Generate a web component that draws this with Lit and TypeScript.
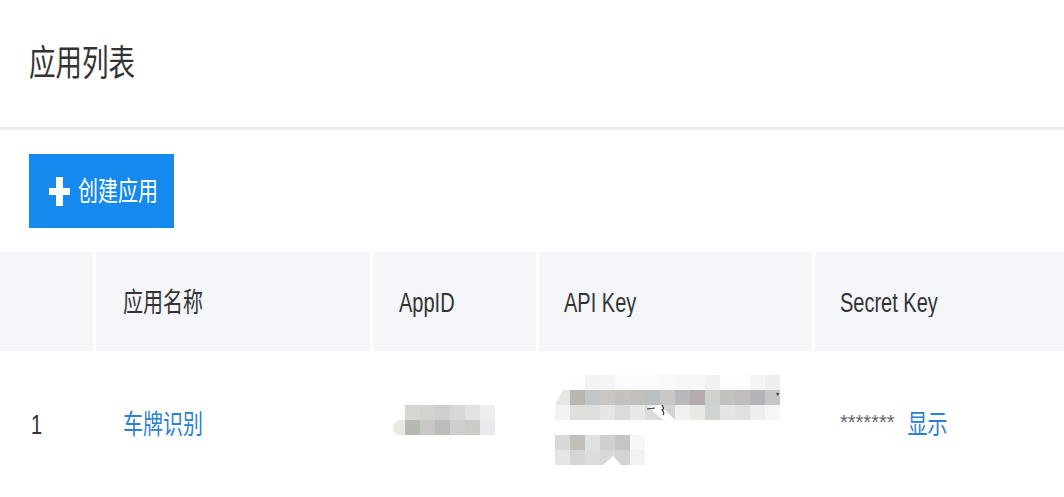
import { LitElement, html, css } from "lit";
import { customElement } from "lit/decorators.js";

const apiRows: (string[] | null)[] = [
  ["#ffffff", "#fdfdfd", "#f3f3f3", "#f4f4f4", "#fbfbfb", "#fbfbfb", "#fbfbfb", "#f9f9f9", "#f8f8f8", "#f8f8f8", "#f1f1f1", "#fdfdfd", "#fdfdfd", "#f4f4f4", "#eeeeee"],
  ["#e6e6e4", "#b9b7b3", "#c4c5c7", "#c9c7c4", "#c3c2be", "#c2c0bc", "#bcc0c1", "#c8c8c6", "#b9b9bb", "#b5adab", "#cdd2ce", "#bfc2be", "#c0bebd", "#b3b4b8", "#c6c6c6"],
  ["#f2f2f0", "#dfdfdd", "#dddfde", "#e6e6e4", "#d9dcd9", "#e8e8e6", "#dcdcdc", "#d4d4d2", "#f0f2f2", "#e8e8e4", "#d0d4d0", "#e4e4e2", "#e0e0e0", "#eeeeee", "#f6f6f6"],
  null,
  ["#d8d8d8", "#c1bfbc", "#e0e2e1", "#cfcfcf", "#c5c5c5", "#f6f7f6"],
  ["#e5e5e5", "#d5d5d3", "#dcdcd8", "#d8d8d8", "#d2d4d4", "#f2f2f2"],
];
const idRows: string[][] = [
  ["#ffffff", "#d6d6d4", "#d2d2d0", "#cfcfcf", "#d8d8d8", "#e2e2e0", "#eeeeee"],
  ["#e8e8e4", "#b5b9b2", "#c8c6c7", "#bcbdb9", "#cfcfcd", "#c9ccc7", "#e8eaed"],
];

@customElement("app-root")
export class AppRoot extends LitElement {
  static styles = css`
    :host {
      display: block;
      width: 1064px;
      height: 497px;
      overflow: hidden;
      background: #fff;
      font-family: "Liberation Sans", "Noto Sans CJK SC", sans-serif;
      font-size: 20px;
      color: #333;
    }
    .tall {
      display: inline-block;
      transform: scaleY(1.36);
      line-height: 28px;
      white-space: nowrap;
    }
    .head {
      height: 127px;
      padding-left: 29px;
      display: flex;
      align-items: center;
      border-bottom: 3px solid #ececec;
    }
    .title {
      font-size: 26.5px;
      color: #333;
    }
    .bar {
      padding: 24px 0 24px 29px;
    }
    .btn {
      width: 145px;
      height: 74px;
      background: #1589ee;
      color: #fff;
      display: flex;
      align-items: center;
      padding-left: 20px;
      box-sizing: border-box;
      gap: 8px;
    }
    .row {
      display: grid;
      grid-template-columns: 93px 274px 163px 273px 1fr;
      column-gap: 3px;
    }
    .th {
      height: 99px;
      background: #f5f6fa;
      display: flex;
      align-items: center;
      padding-left: 25px;
      box-sizing: border-box;
    }
    .th.cjk {
      padding-left: 27px;
    }
    .th.app {
      padding-left: 26px;
    }
    .td {
      height: 146px;
      display: flex;
      align-items: center;
      padding-left: 27px;
      box-sizing: border-box;
    }
    .td.num {
      padding-left: 31px;
    }
    .td.id {
      padding-left: 20px;
      padding-bottom: 8px;
    }
    .td.key {
      padding-left: 16px;
      align-items: flex-start;
      padding-top: 24px;
    }
    .td.sec {
      padding-left: 25px;
      gap: 13px;
    }
    .link {
      color: #2a80d2;
    }
    .stars {
      color: #666;
      position: relative;
      top: -2px;
    }
    .mosaic {
      display: flex;
      flex-direction: column;
      position: relative;
    }
    .mrow {
      display: flex;
      height: 15px;
    }
    .cell {
      width: 15px;
      height: 15px;
    }
    .id .first {
      width: 12px;
      border-radius: 8px 0 0 8px;
    }
    .marks {
      position: absolute;
      left: 0;
      top: 0;
    }
  `;

  private mosaic(rows: (string[] | null)[], round = false) {
    return html`<div class="mosaic">
      ${rows.map(
        (r) => html`<div class="mrow">
          ${(r ?? []).map(
            (c, i) =>
              html`<div
                class="cell ${round && i === 0 ? "first" : ""}"
                style="background:${c}"
              ></div>`
          )}
        </div>`
      )}
      ${round
        ? ""
        : html`<svg class="marks" width="225" height="90" viewBox="0 0 225 90">
            <polygon points="0,30 8,15 0,15" fill="#fff"></polygon>
            <polygon points="92,31 105,30 120,45 108,45" fill="#fff"></polygon>
            <path d="M92 34 L100 33 M107 30 Q110 34 107 35 Q110 38 108 40" fill="none" stroke="#333" stroke-width="1.2"></path>
            <path d="M221 18 L224 18 L223 21 Z" fill="#333"></path>
            <polygon points="48,90 58,81 66,90" fill="#fff"></polygon>
          </svg>`}
    </div>`;
  }

  render() {
    return html`
      <div class="head"><span class="tall title">应用列表</span></div>
      <div class="bar">
        <div class="btn">
          <svg width="21" height="29" viewBox="0 0 21 29">
            <rect x="7" y="0" width="7" height="29" fill="#fff"></rect>
            <rect x="0" y="11" width="21" height="7" fill="#fff"></rect>
          </svg>
          <span class="tall">创建应用</span>
        </div>
      </div>
      <div class="row">
        <div class="th"></div>
        <div class="th cjk"><span class="tall">应用名称</span></div>
        <div class="th app"><span class="tall">AppID</span></div>
        <div class="th"><span class="tall">API Key</span></div>
        <div class="th"><span class="tall">Secret Key</span></div>
      </div>
      <div class="row">
        <div class="td num"><span class="tall">1</span></div>
        <div class="td"><span class="tall link">车牌识别</span></div>
        <div class="td id">${this.mosaic(idRows, true)}</div>
        <div class="td key">${this.mosaic(apiRows)}</div>
        <div class="td sec">
          <span class="stars">*******</span>
          <span class="tall link">显示</span>
        </div>
      </div>
    `;
  }
}
